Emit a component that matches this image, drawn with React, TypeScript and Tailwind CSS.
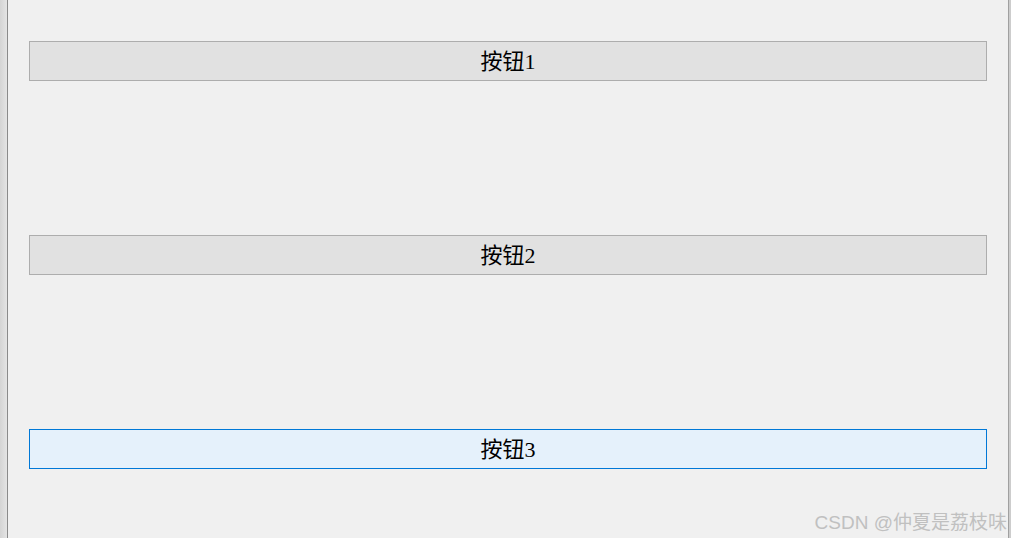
export default function App() {
  const font = { fontFamily: '"Liberation Serif", "Noto Sans CJK SC", serif' };
  return (
    <div className="w-[1011px] h-[538px] flex bg-[#f0f0f0] overflow-hidden">
      <div className="w-[7px] h-full bg-gradient-to-r from-[#d4d4d4] to-[#e4e4e4]" />
      <div className="w-px h-full bg-[#8a8a8a]" />
      <div className="relative flex-1 flex flex-col px-[21px] pt-[41px] gap-[154px]">
        <button
          className="h-[40px] w-full border border-[#adadad] bg-[#e1e1e1] text-[22px] text-black flex items-center justify-center"
          style={font}
        >
          按钮1
        </button>
        <button
          className="h-[40px] w-full border border-[#adadad] bg-[#e1e1e1] text-[22px] text-black flex items-center justify-center"
          style={font}
        >
          按钮2
        </button>
        <button
          className="h-[40px] w-full border border-[#0078d7] bg-[#e5f1fb] text-[22px] text-black flex items-center justify-center"
          style={font}
        >
          按钮3
        </button>
        <div
          className="absolute right-[1px] bottom-[6px] text-[19px] text-[#c0c0c0] leading-none"
          style={{ fontFamily: '"Liberation Sans", "Noto Sans CJK SC", sans-serif' }}
        >
          CSDN @仲夏是荔枝味
        </div>
      </div>
      <div className="w-px h-full bg-[#a0a0a0]" />
      <div className="w-[2px] h-full bg-[#cdcdcd]" />
    </div>
  );
}
